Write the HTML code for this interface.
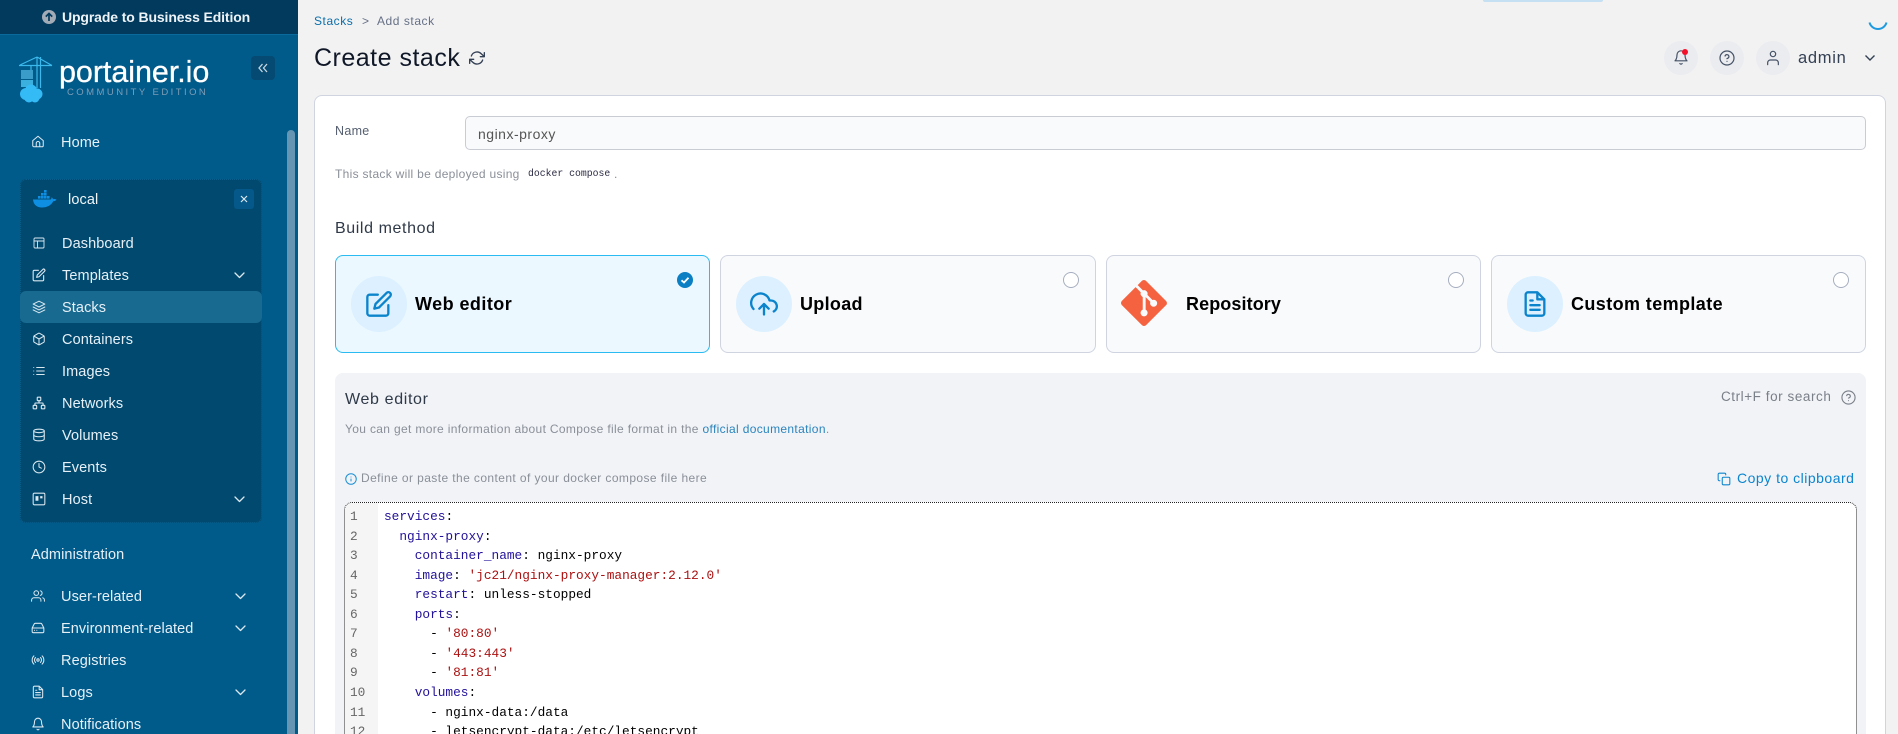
<!DOCTYPE html>
<html lang="en"><head><meta charset="utf-8"><title>Create stack</title>
<style>
html,body{margin:0;padding:0;width:1898px;height:734px;overflow:hidden;background:#f2f2f3;font-family:"Liberation Sans",sans-serif}
#w{position:relative;width:1898px;height:734px;overflow:hidden;background:#f2f2f3}
.a{position:absolute}
.t{position:absolute;white-space:nowrap;height:20px;line-height:20px}
svg{position:absolute;overflow:visible}
.i{fill:none;stroke:#dbe8f0;stroke-width:2;stroke-linecap:round;stroke-linejoin:round}
.m{font-size:14.5px;color:#e6f0f6;left:62px;letter-spacing:.1px}
.m2{left:61px}
.card{position:absolute;top:255px;height:96px;background:#f9fafc;border:1px solid #cfd4e0;border-radius:8px;box-sizing:content-box}
.ic{position:absolute;width:56px;height:56px;border-radius:50%;background:#dcf0ff;top:276px}
.ct{position:absolute;top:294px;font-size:18px;font-weight:bold;color:#000;white-space:nowrap;height:20px;line-height:20px}
.r{position:absolute;top:272px;width:14px;height:14px;border-radius:50%;border:1px solid #a6aebf;background:#fff}
.cb{fill:none;stroke:#0b84cc;stroke-width:2;stroke-linecap:round;stroke-linejoin:round}
.hd{fill:none;stroke:#455266;stroke-width:2;stroke-linecap:round;stroke-linejoin:round}
.circ{position:absolute;top:41px;width:34px;height:34px;border-radius:50%;background:#ebecf0}
.code{font-family:"Liberation Mono",monospace;font-size:12.8px;position:absolute;white-space:pre;height:20px;line-height:20px;color:#000}
.k{color:#221199}.s{color:#aa1111}
.n{font-family:"Liberation Mono",monospace;font-size:12.8px;position:absolute;left:350px;height:20px;line-height:20px;color:#666}
</style></head><body><div id="w">

<!-- sidebar -->
<div class="a" style="left:0;top:0;width:298px;height:734px;background:#005a8a"></div>
<div class="a" style="left:0;top:0;width:298px;height:35px;background:#023a5d;border-bottom:1px solid #0a6a9c;box-sizing:border-box"></div>
<div class="a" style="left:42px;top:10px;width:14px;height:14px;border-radius:50%;background:#a3abb7"></div>
<svg style="left:42px;top:10px" width="14" height="14" viewBox="0 0 14 14"><path d="M7 11V3.500M3.800 6.600 7 3.400l3.200 3.200" fill="none" stroke="#023a5d" stroke-width="1.700"/></svg>
<div class="t" style="left:62px;top:7px;font-size:14px;font-weight:bold;color:#eef3f7;letter-spacing:-.12px">Upgrade to Business Edition</div>

<!-- logo -->
<svg style="left:19px;top:56px" width="34" height="47" viewBox="0 0 34 47">
<g fill="none" stroke="#3bb9ec" stroke-width="1.200"><path d="M0 9.500h33M18 1 1 9M18 1l15 8.500M18 1v31M21.500 1v31M12 9.500V16"/></g>
<rect x="2" y="14" width="12" height="9" fill="#3a9dc9"/><rect x="2" y="24" width="12" height="7" fill="#3bb0de"/>
<g fill="#34baf5"><circle cx="7" cy="38" r="6"/><circle cx="12" cy="34.500" r="6"/><circle cx="18" cy="38" r="5.500"/><circle cx="10" cy="41.500" r="5"/><circle cx="16" cy="42" r="4.500"/></g></svg>
<div class="t" style="left:59px;top:57px;font-size:30.5px;line-height:30px;height:30px;color:#fff;letter-spacing:-.05px;-webkit-text-stroke:.3px #fff">portainer.io</div>
<div class="t" style="left:67px;top:83px;font-size:9.5px;color:#7d9db5;letter-spacing:2.45px">COMMUNITY EDITION</div>
<div class="a" style="left:251px;top:56px;width:24px;height:24px;background:#044a72;border-radius:4px"></div>
<svg style="left:257px;top:62px" width="12" height="12" viewBox="0 0 12 12"><path d="M5.500 2 2 6l3.500 4M10 2 6.500 6l3.500 4" fill="none" stroke="#c8d6e0" stroke-width="1.300"/></svg>

<!-- scrollbar -->
<div class="a" style="left:287px;top:130px;width:8px;height:604px;background:#6595b2;border-radius:4px 4px 0 0"></div>

<!-- Home -->
<svg class="i" style="left:31px;top:134px;stroke-width:1.800" width="14" height="15" viewBox="0 0 24 24"><path d="M3 10.500 12 3l9 7.500V19a2 2 0 0 1-2 2H5a2 2 0 0 1-2-2zM9 21v-6a3 3 0 0 1 6 0v6"/></svg>
<div class="t m m2" style="top:133px">Home</div>

<!-- env box -->
<div class="a" style="left:20px;top:179px;width:242px;height:344px;background:#01496f;border-radius:6px;outline:1px dotted #0a5f8c;outline-offset:-1px"></div>
<svg style="left:33px;top:190px" width="24" height="18" viewBox="0 0 24 18"><g fill="#0f8fe3"><rect x="5" y="6" width="2.600" height="2.600"/><rect x="8" y="6" width="2.600" height="2.600"/><rect x="11" y="6" width="2.600" height="2.600"/><rect x="8" y="3" width="2.600" height="2.600"/><rect x="11" y="3" width="2.600" height="2.600"/><rect x="14" y="6" width="2.600" height="2.600"/><rect x="11" y="0" width="2.600" height="2.600"/><path d="M0 9.500h17.500c.6 0 1-1 1.100-2.300.9.500 1.300 1.300 1.400 2 1-.3 2.500-.2 3.500.6-.7 1-2 1.400-3.300 1.400C18.500 15 14 17.500 9 17.500 3.500 17.500.5 14.500 0 9.500z"/></g></svg>
<div class="t" style="left:68px;top:190px;font-size:14.5px;color:#f0f5f8;letter-spacing:.1px">local</div>
<div class="a" style="left:234px;top:189px;width:20px;height:20px;background:#05588a;border-radius:3px"></div>
<svg style="left:240px;top:195px" width="8" height="8" viewBox="0 0 8 8"><path d="M1 1l6 6M7 1 1 7" stroke="#dbe8f0" stroke-width="1.200"/></svg>

<div class="a" style="left:20px;top:291px;width:242px;height:32px;background:#186a91;border-radius:6px"></div>

<svg class="i" style="left:33px;top:237px;stroke-width:1.800" width="12" height="12" viewBox="0 0 24 24"><rect x="2" y="2" width="20" height="20" rx="2"/><path d="M2 8h20M9 22V8"/></svg>
<div class="t m" style="top:234px">Dashboard</div>
<svg class="i" style="left:32px;top:268px;stroke-width:1.900" width="14" height="14" viewBox="0 0 24 24"><path d="M11 4H4a2 2 0 0 0-2 2v14a2 2 0 0 0 2 2h14a2 2 0 0 0 2-2v-7"/><path d="M18.500 2.500a2.121 2.121 0 0 1 3 3L12 15l-4 1 1-4z"/></svg>
<div class="t m" style="top:266px">Templates</div>
<svg class="i" style="left:234px;top:272px;stroke-width:1.300" width="11" height="6" viewBox="0 0 11 6"><path d="M1 1l4.500 4.500L10 1"/></svg>
<svg class="i" style="left:32px;top:300px;stroke-width:1.700" width="14" height="14" viewBox="0 0 24 24"><path d="M12 2 2 7l10 5 10-5zM2 17l10 5 10-5M2 12l10 5 10-5"/></svg>
<div class="t m" style="top:298px">Stacks</div>
<svg class="i" style="left:32px;top:332px;stroke-width:1.800" width="14" height="14" viewBox="0 0 24 24"><path d="M21 16V8a2 2 0 0 0-1-1.730l-7-4a2 2 0 0 0-2 0l-7 4A2 2 0 0 0 3 8v8a2 2 0 0 0 1 1.730l7 4a2 2 0 0 0 2 0l7-4A2 2 0 0 0 21 16zM3.270 6.960 12 12.010l8.730-5.050M12 22.080V12"/></svg>
<div class="t m" style="top:330px">Containers</div>
<svg class="i" style="left:32px;top:364px;stroke-width:1.800" width="14" height="14" viewBox="0 0 24 24"><path d="M8 6h13M8 12h13M8 18h13M3 6h.01M3 12h.01M3 18h.01"/></svg>
<div class="t m" style="top:362px">Images</div>
<svg class="i" style="left:32px;top:396px;stroke-width:1.900" width="14" height="14" viewBox="0 0 24 24"><rect x="9" y="2" width="6" height="6" rx="1"/><rect x="2" y="16" width="6" height="6" rx="1"/><rect x="16" y="16" width="6" height="6" rx="1"/><path d="M5 16v-3a1 1 0 0 1 1-1h12a1 1 0 0 1 1 1v3M12 12V8"/></svg>
<div class="t m" style="top:394px">Networks</div>
<svg class="i" style="left:32px;top:428px;stroke-width:1.800" width="14" height="14" viewBox="0 0 24 24"><ellipse cx="12" cy="5" rx="9" ry="3"/><path d="M21 12c0 1.660-4 3-9 3s-9-1.340-9-3"/><path d="M3 5v14c0 1.660 4 3 9 3s9-1.340 9-3V5"/></svg>
<div class="t m" style="top:426px">Volumes</div>
<svg class="i" style="left:32px;top:460px;stroke-width:1.800" width="14" height="14" viewBox="0 0 24 24"><circle cx="12" cy="12" r="10"/><path d="M12 6v6l4 2"/></svg>
<div class="t m" style="top:458px">Events</div>
<svg class="i" style="left:32px;top:492px;stroke-width:1.800" width="14" height="14" viewBox="0 0 24 24"><rect x="2" y="2" width="20" height="20" rx="2"/><path d="M6 7h5v8H6zM14 7h4v4h-4z" fill="#dbe8f0" stroke="none"/></svg>
<div class="t m" style="top:490px">Host</div>
<svg class="i" style="left:234px;top:496px;stroke-width:1.300" width="11" height="6" viewBox="0 0 11 6"><path d="M1 1l4.500 4.500L10 1"/></svg>

<div class="t" style="left:31px;top:545px;font-size:14.5px;color:#e6f0f6;letter-spacing:.1px">Administration</div>

<svg class="i" style="left:31px;top:589px;stroke-width:1.700" width="14" height="14" viewBox="0 0 24 24"><path d="M17 21v-2a4 4 0 0 0-4-4H5a4 4 0 0 0-4 4v2"/><circle cx="9" cy="7" r="4"/><path d="M23 21v-2a4 4 0 0 0-3-3.870M16 3.130a4 4 0 0 1 0 7.750"/></svg>
<div class="t m m2" style="top:587px">User-related</div>
<svg class="i" style="left:235px;top:593px;stroke-width:1.300" width="11" height="6" viewBox="0 0 11 6"><path d="M1 1l4.500 4.500L10 1"/></svg>
<svg class="i" style="left:31px;top:621px;stroke-width:1.800" width="14" height="14" viewBox="0 0 24 24"><path d="M22 12H2M5.450 5.110 2 12v6a2 2 0 0 0 2 2h16a2 2 0 0 0 2-2v-6l-3.450-6.890A2 2 0 0 0 16.760 4H7.240a2 2 0 0 0-1.790 1.110zM6 16h.01M10 16h.01"/></svg>
<div class="t m m2" style="top:619px">Environment-related</div>
<svg class="i" style="left:235px;top:625px;stroke-width:1.300" width="11" height="6" viewBox="0 0 11 6"><path d="M1 1l4.500 4.500L10 1"/></svg>
<svg class="i" style="left:31px;top:653px;stroke-width:1.800" width="14" height="14" viewBox="0 0 24 24"><circle cx="12" cy="12" r="2"/><path d="M16.240 7.760a6 6 0 0 1 0 8.490m-8.480-.01a6 6 0 0 1 0-8.490m11.310-2.820a10 10 0 0 1 0 14.140m-14.140 0a10 10 0 0 1 0-14.140"/></svg>
<div class="t m m2" style="top:651px">Registries</div>
<svg class="i" style="left:31px;top:685px;stroke-width:1.800" width="14" height="14" viewBox="0 0 24 24"><path d="M14 2H6a2 2 0 0 0-2 2v16a2 2 0 0 0 2 2h12a2 2 0 0 0 2-2V8zM14 2v6h6M16 13H8M16 17H8M10 9H8"/></svg>
<div class="t m m2" style="top:683px">Logs</div>
<svg class="i" style="left:235px;top:689px;stroke-width:1.300" width="11" height="6" viewBox="0 0 11 6"><path d="M1 1l4.500 4.500L10 1"/></svg>
<svg class="i" style="left:31px;top:717px;stroke-width:1.800" width="14" height="14" viewBox="0 0 24 24"><path d="M18 8A6 6 0 0 0 6 8c0 7-3 9-3 9h18s-3-2-3-9M13.730 21a2 2 0 0 1-3.460 0"/></svg>
<div class="t m m2" style="top:715px">Notifications</div>

<!-- header -->
<div class="a" style="left:1483px;top:0;width:120px;height:2px;background:#c5e0f2;border-radius:0 0 8px 8px"></div>
<div class="t" style="left:314px;top:11px;font-size:12px;color:#0b6fa8;letter-spacing:.55px">Stacks</div>
<div class="t" style="left:362px;top:11px;font-size:12px;color:#667085">&gt;</div>
<div class="t" style="left:377px;top:11px;font-size:12px;color:#667085;letter-spacing:.55px">Add stack</div>
<div class="t" style="left:314px;top:48px;font-size:25px;color:#101828;letter-spacing:.5px">Create stack</div>
<svg style="left:469px;top:50px;fill:none;stroke:#344054;stroke-width:2;stroke-linecap:round;stroke-linejoin:round" width="16" height="16" viewBox="0 0 24 24"><path d="M23 4v6h-6M1 20v-6h6M3.510 9a9 9 0 0 1 14.850-3.360L23 10M1 14l4.640 4.360A9 9 0 0 0 20.490 15"/></svg>
<svg style="left:1866px;top:14px" width="24" height="24" viewBox="0 0 24 24"><path d="M3.500 8.500A8.800 8.800 0 0 0 20.500 8.500" fill="none" stroke="#1e9be0" stroke-width="2"/></svg>

<div class="circ" style="left:1664px"></div>
<svg class="hd" style="left:1673px;top:49px;stroke-width:1.800" width="16" height="17" viewBox="0 0 24 24"><path d="M18 8A6 6 0 0 0 6 8c0 7-3 9-3 9h18s-3-2-3-9M13.730 21a2 2 0 0 1-3.460 0"/></svg>
<div class="a" style="left:1682px;top:49px;width:6px;height:6px;border-radius:50%;background:#f5102a"></div>
<div class="circ" style="left:1710px"></div>
<svg class="hd" style="left:1719px;top:50px;stroke-width:1.800" width="16" height="16" viewBox="0 0 24 24"><circle cx="12" cy="12" r="10.500"/><path d="M9.090 9a3 3 0 0 1 5.830 1c0 2-3 3-3 3M12 17h.01"/></svg>
<div class="circ" style="left:1756px"></div>
<svg class="hd" style="left:1765px;top:50px;stroke-width:1.800" width="16" height="16" viewBox="0 0 24 24"><path d="M20 22v-3a4 4 0 0 0-4-4H8a4 4 0 0 0-4 4v3"/><circle cx="12" cy="6" r="4"/></svg>
<div class="t" style="left:1798px;top:48px;font-size:16.5px;color:#344054;letter-spacing:.7px">admin</div>
<svg style="left:1865px;top:55px" width="10" height="6" viewBox="0 0 10 6"><path d="M.5.500 5 5 9.500.5" fill="none" stroke="#344054" stroke-width="1.400"/></svg>

<!-- main card -->
<div class="a" style="left:314px;top:95px;width:1572px;height:660px;background:#fff;border:1px solid #cfd4e0;border-radius:8px;box-sizing:border-box"></div>
<div class="t" style="left:335px;top:121px;font-size:12.5px;color:#555f70;letter-spacing:.3px">Name</div>
<div class="a" style="left:465px;top:116px;width:1401px;height:34px;background:#f9fafb;border:1px solid #c9ccd3;border-radius:5px;box-sizing:border-box"></div>
<div class="t" style="left:478px;top:124px;font-size:14px;color:#555;letter-spacing:.5px">nginx-proxy</div>
<div class="t" style="left:335px;top:164px;font-size:12px;color:#8a8f98;letter-spacing:.3px">This stack will be deployed using</div>
<div class="t" style="left:528px;top:164px;font-family:'Liberation Mono',monospace;font-size:9.800px;color:#2b2b45">docker compose</div>
<div class="t" style="left:614px;top:164px;font-size:12px;color:#8a8f98">.</div>
<div class="t" style="left:335px;top:219px;font-size:16px;color:#2f3948;letter-spacing:.6px">Build method</div>

<!-- build cards -->
<div class="card" style="left:335px;width:373px;background:#ebf8ff;border-color:#2bbbf3"></div>
<div class="ic" style="left:351px"></div>
<svg style="left:365px;top:290px" class="cb" width="28" height="28" viewBox="0 0 24 24"><path d="M11 4H4a2 2 0 0 0-2 2v14a2 2 0 0 0 2 2h14a2 2 0 0 0 2-2v-7"/><path d="M18.500 2.500a2.121 2.121 0 0 1 3 3L12 15l-4 1 1-4z"/></svg>
<div class="ct" style="left:415px;letter-spacing:.45px">Web editor</div>
<div class="a" style="left:677px;top:272px;width:16px;height:16px;border-radius:50%;background:#0a7fc4"></div>
<svg style="left:677px;top:272px" width="16" height="16" viewBox="0 0 16 16"><path d="M4.500 8.300 7 10.500 11.500 5.800" fill="none" stroke="#fff" stroke-width="1.800"/></svg>

<div class="card" style="left:720px;width:374px"></div>
<div class="ic" style="left:736px"></div>
<svg style="left:750px;top:290px" class="cb" width="28" height="28" viewBox="0 0 24 24"><path d="M16 16l-4-4-4 4M12 12v9M20.390 18.390A5 5 0 0 0 18 9h-1.260A8 8 0 1 0 3 16.300"/></svg>
<div class="ct" style="left:800px;letter-spacing:.3px">Upload</div>
<div class="r" style="left:1063px"></div>

<div class="card" style="left:1106px;width:373px"></div>
<svg style="left:1121px;top:280px" width="46" height="46" viewBox="0 0 92 92"><path d="M90.156 41.965 50.036 1.848a5.918 5.918 0 0 0-8.372 0l-8.328 8.332 10.566 10.566a7.030 7.030 0 0 1 7.230 1.684 7.034 7.034 0 0 1 1.669 7.277l10.187 10.184a7.028 7.028 0 0 1 7.278 1.672 7.040 7.040 0 0 1 0 9.957 7.050 7.050 0 0 1-9.965 0 7.044 7.044 0 0 1-1.528-7.660l-9.500-9.497V59.360a7.040 7.040 0 0 1 1.860 11.290 7.040 7.040 0 0 1-9.957 0 7.040 7.040 0 0 1 0-9.958 7.060 7.060 0 0 1 2.304-1.539V33.926a7.049 7.049 0 0 1-3.820-9.234L29.242 14.272 1.730 41.777a5.925 5.925 0 0 0 0 8.371L41.852 90.270a5.925 5.925 0 0 0 8.370 0l39.934-39.934a5.925 5.925 0 0 0 0-8.371" fill="#f4623f"/></svg>
<div class="ct" style="left:1186px;letter-spacing:.1px">Repository</div>
<div class="r" style="left:1448px"></div>

<div class="card" style="left:1491px;width:373px"></div>
<div class="ic" style="left:1507px"></div>
<svg style="left:1521px;top:290px" class="cb" width="28" height="28" viewBox="0 0 24 24"><path d="M14 2H6a2 2 0 0 0-2 2v16a2 2 0 0 0 2 2h12a2 2 0 0 0 2-2V8zM14 2v6h6M16 13H8M16 17H8M10 9H8"/></svg>
<div class="ct" style="left:1571px;letter-spacing:.4px">Custom template</div>
<div class="r" style="left:1833px"></div>

<!-- editor section -->
<div class="a" style="left:335px;top:373px;width:1531px;height:361px;background:#f1f3f7;border-radius:8px 8px 0 0"></div>
<div class="t" style="left:345px;top:390px;font-size:16px;color:#2f3948;letter-spacing:.65px">Web editor</div>
<div class="t" style="left:345px;top:419px;font-size:12px;color:#8a8f98;letter-spacing:.34px">You can get more information about Compose file format in the <span style="color:#2a84bd">official documentation</span>.</div>
<div class="t" style="left:1721px;top:387px;font-size:13.500px;color:#7a7f88;letter-spacing:.56px">Ctrl+F for search</div>
<svg style="left:1841px;top:390px;fill:none;stroke:#7a7f88;stroke-width:1.800;stroke-linecap:round" width="15" height="15" viewBox="0 0 24 24"><circle cx="12" cy="12" r="10.500"/><path d="M9.090 9a3 3 0 0 1 5.830 1c0 2-3 3-3 3M12 17h.01"/></svg>
<svg style="left:345px;top:473px;fill:none;stroke:#1a8fd4;stroke-width:2;stroke-linecap:round" width="12" height="12" viewBox="0 0 24 24"><circle cx="12" cy="12" r="10.500"/><path d="M12 16v-4M12 8h.01"/></svg>
<div class="t" style="left:361px;top:468px;font-size:12px;color:#8a8f98;letter-spacing:.41px">Define or paste the content of your docker compose file here</div>
<svg class="cb" style="left:1717px;top:472px;stroke-width:1.800" width="14" height="14" viewBox="0 0 24 24"><rect x="9" y="9" width="13" height="13" rx="2"/><path d="M5 15H4a2 2 0 0 1-2-2V4a2 2 0 0 1 2-2h9a2 2 0 0 1 2 2v1"/></svg>
<div class="t" style="left:1737px;top:468px;font-size:14px;color:#0b85cf;letter-spacing:.5px">Copy to clipboard</div>

<!-- code editor -->
<div class="a" style="left:344px;top:502px;width:1513px;height:260px;background:#fff;border:1px dotted #222;border-radius:8px;box-sizing:border-box"></div>
<div class="a" style="left:345px;top:503px;width:33px;height:231px;background:#f5f5f5;border-radius:7px 0 0 0"></div>

<div class="n" style="top:507px">1</div><div class="n" style="top:527px">2</div><div class="n" style="top:546px">3</div><div class="n" style="top:566px">4</div><div class="n" style="top:585px">5</div><div class="n" style="top:605px">6</div><div class="n" style="top:624px">7</div><div class="n" style="top:644px">8</div><div class="n" style="top:663px">9</div><div class="n" style="top:683px">10</div><div class="n" style="top:703px">11</div><div class="n" style="top:722px">12</div>

<div class="code" style="left:384px;top:507px"><span class="k">services</span>:</div>
<div class="code" style="left:384px;top:527px">  <span class="k">nginx-proxy</span>:</div>
<div class="code" style="left:384px;top:546px">    <span class="k">container_name</span>: nginx-proxy</div>
<div class="code" style="left:384px;top:566px">    <span class="k">image</span>: <span class="s">'jc21/nginx-proxy-manager:2.12.0'</span></div>
<div class="code" style="left:384px;top:585px">    <span class="k">restart</span>: unless-stopped</div>
<div class="code" style="left:384px;top:605px">    <span class="k">ports</span>:</div>
<div class="code" style="left:384px;top:624px">      - <span class="s">'80:80'</span></div>
<div class="code" style="left:384px;top:644px">      - <span class="s">'443:443'</span></div>
<div class="code" style="left:384px;top:663px">      - <span class="s">'81:81'</span></div>
<div class="code" style="left:384px;top:683px">    <span class="k">volumes</span>:</div>
<div class="code" style="left:384px;top:703px">      - nginx-data:/data</div>
<div class="code" style="left:384px;top:722px">      - letsencrypt-data:/etc/letsencrypt</div>
</div></body></html>
